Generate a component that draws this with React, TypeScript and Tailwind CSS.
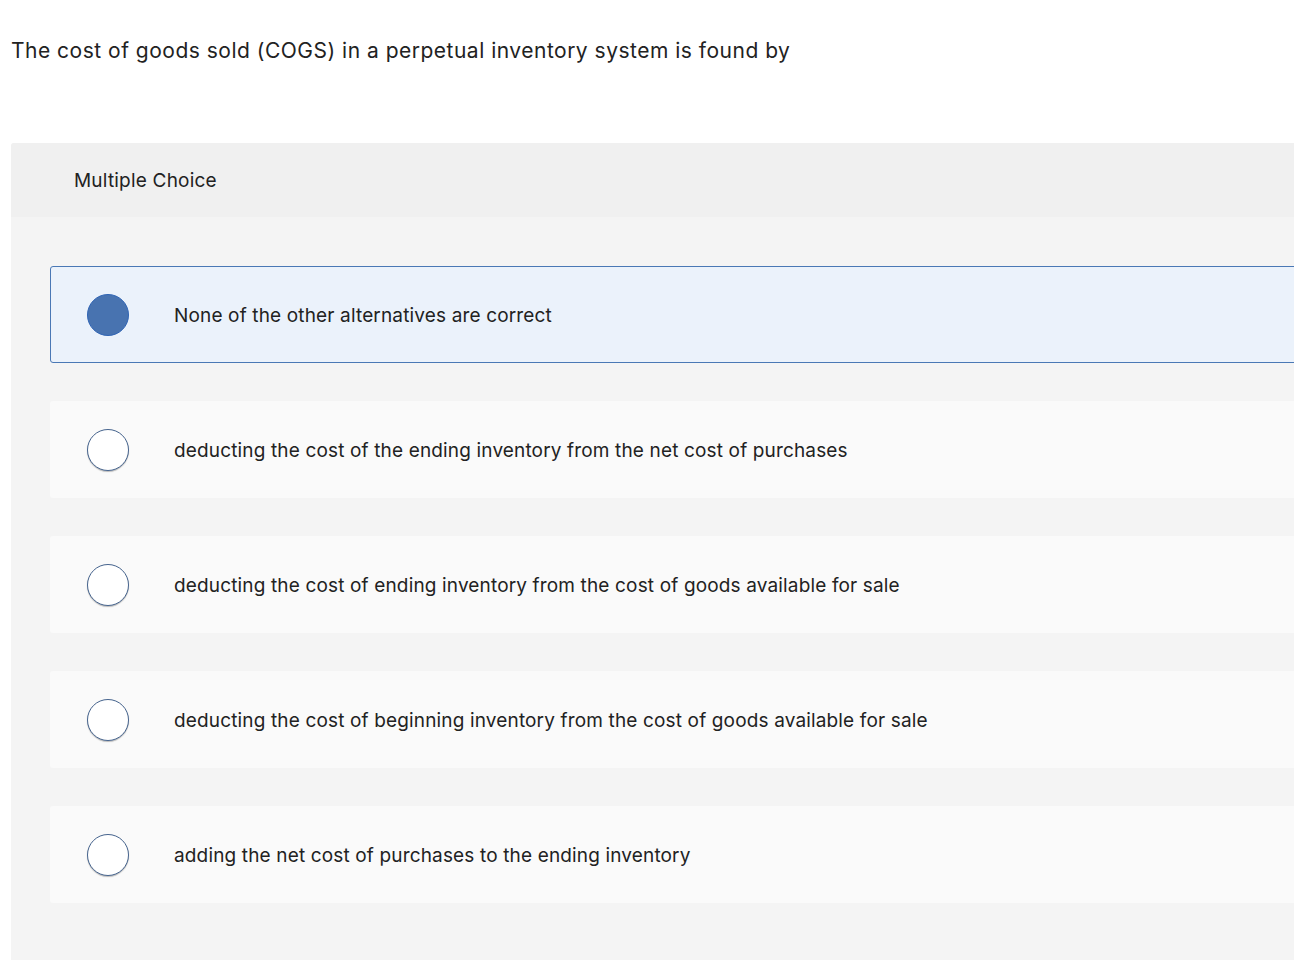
import React from 'react';

const OPTIONS: string[] = [
  'None of the other alternatives are correct',
  'deducting the cost of the ending inventory from the net cost of purchases',
  'deducting the cost of ending inventory from the cost of goods available for sale',
  'deducting the cost of beginning inventory from the cost of goods available for sale',
  'adding the net cost of purchases to the ending inventory',
];

function Radio({ checked }: { checked: boolean }) {
  return checked ? (
    <div className="w-[42px] h-[42px] rounded-full bg-[#4873b0] border border-[#2f64b4] shrink-0" />
  ) : (
    <div className="w-[42px] h-[42px] rounded-full bg-white border-[1.5px] border-[#46648e] shadow-[0_1px_1px_rgba(0,0,0,0.25)] shrink-0" />
  );
}

export default function App() {
  const selected = 0;
  return (
    <div className="w-[1294px] h-[960px] overflow-hidden bg-white text-[#222] font-['Inter','Open_Sans',sans-serif]">
      <p className="pl-[11px] pt-[37px] text-[21px] leading-[28px] tracking-[0.5px]">
        The cost of goods sold (COGS) in a perpetual inventory system is found by
      </p>

      <div className="ml-[11px] mt-[78px] w-[1320px] rounded-tl-[3px] bg-[#f4f4f4] pb-[60px]">
        <div className="h-[74px] flex items-center pl-[63px] pt-[2px] bg-[#f0f0f0] rounded-tl-[3px] text-[19px] tracking-[0.2px]">
          Multiple Choice
        </div>
        <div className="pt-[49px] pl-[39px] flex flex-col gap-[38px]">
          {OPTIONS.map((text, i) => (
            <div
              key={i}
              className={
                i === selected
                  ? 'h-[97px] flex items-center pl-[36px] rounded-[3px] border border-[#4a78b5] bg-[#ebf2fb]'
                  : 'h-[97px] flex items-center pl-[37px] rounded-[3px] bg-[#fafafa]'
              }
            >
              <Radio checked={i === selected} />
              <span className="ml-[45px] mt-[2px] text-[19px] leading-[24px] tracking-[0.15px]">{text}</span>
            </div>
          ))}
        </div>
      </div>
    </div>
  );
}
